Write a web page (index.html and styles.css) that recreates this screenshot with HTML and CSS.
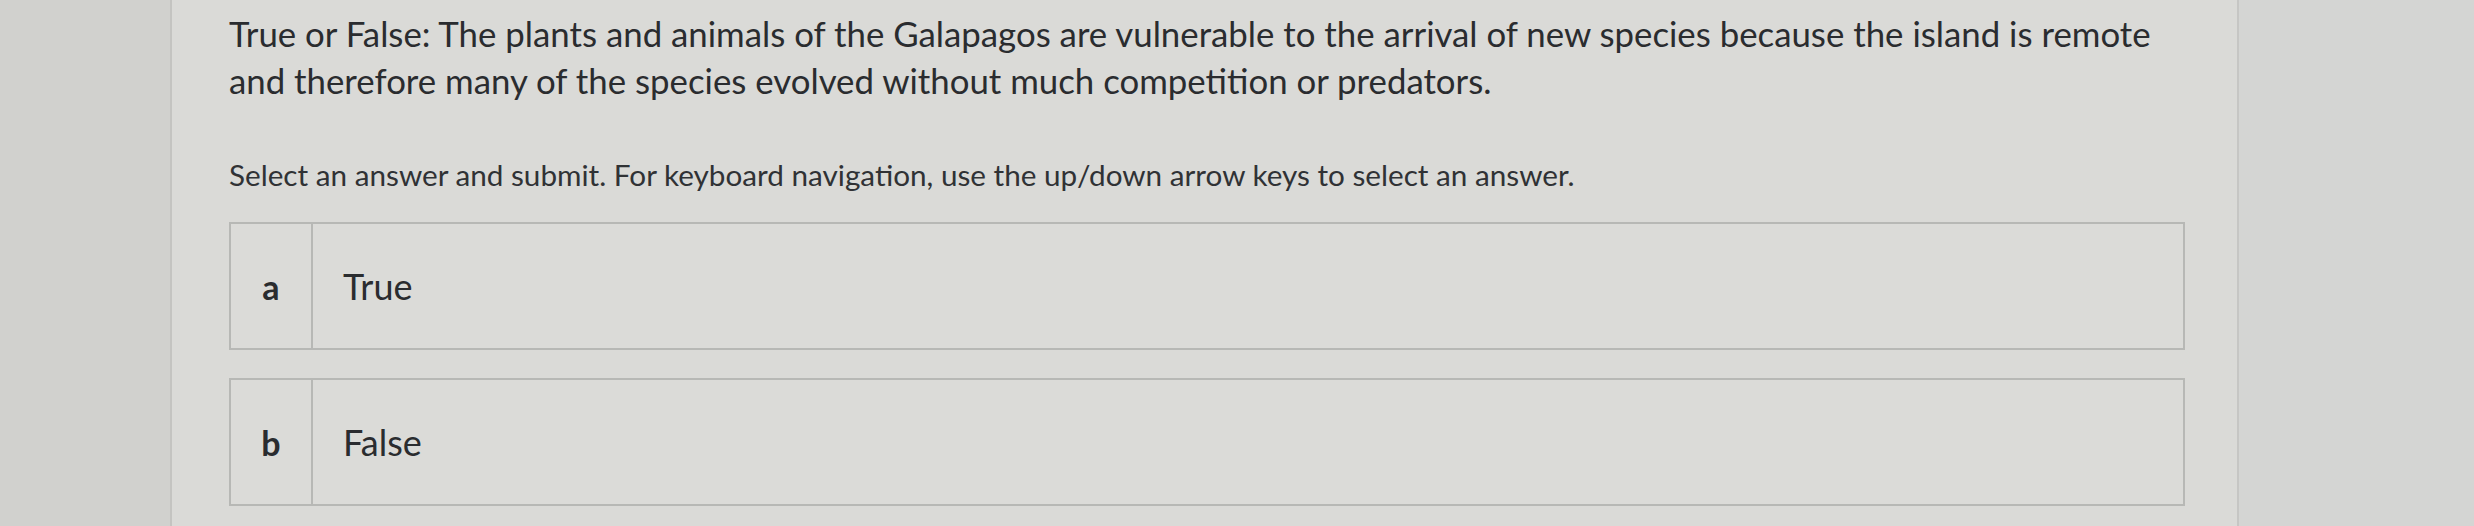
FILE: index.html
```html
<!DOCTYPE html>
<html lang="en">
<head>
    <meta charset="UTF-8">
    <meta name="viewport" content="width=device-width, initial-scale=1.0">
    <title>Question</title>
    <link rel="stylesheet" href="styles.css">
</head>
<body>
    <div class="page">
        <div class="side-left"></div>

        <div class="main">
            <p class="question">True or False: The plants and animals of the Galapagos are vulnerable to the arrival of new species because the island is remote and therefore many of the species evolved without much competition or predators.</p>

            <p class="hint">Select an answer and submit. For keyboard navigation, use the up/down arrow keys to select an answer.</p>

            <div class="answers">
                <div class="answer">
                    <div class="answer-letter">a</div>
                    <div class="answer-text">True</div>
                </div>
                <div class="answer">
                    <div class="answer-letter">b</div>
                    <div class="answer-text">False</div>
                </div>
            </div>
        </div>

        <div class="side-right"></div>
    </div>
</body>
</html>
```

FILE: styles.css
```css
body {
    margin: 0;
    background-color: #d8d8d5;
    font-family: Lato, "Liberation Sans", sans-serif;
    color: #2a2c2f;
}

.page {
    display: flex;
    height: 526px;
    overflow: hidden;
}

.side-left {
    width: 170px;
    flex-shrink: 0;
    background-color: #d1d1ce;
    border-right: 2px solid #c4c4c1;
}

.side-right {
    flex: 1;
    background-color: #d4d5d3;
    border-left: 2px solid #c6c6c4;
}

.main {
    width: 2065px;
    flex-shrink: 0;
    padding: 10px 52px 0 57px;
    box-sizing: border-box;
    background-color: #dadad7;
}

.question {
    margin: 0;
    font-size: 34.8px;
    line-height: 47px;
    width: 1930px;
}

.hint {
    margin: 52px 0 0;
    font-size: 29.7px;
    line-height: 38px;
    color: #303235;
}

.answers {
    display: flex;
    flex-direction: column;
    gap: 28px;
    margin-top: 28px;
}

.answer {
    display: flex;
    height: 128px;
    box-sizing: border-box;
    border: 2px solid #b7b8b5;
    background-color: #dbdbd8;
}

.answer-letter {
    width: 80px;
    flex-shrink: 0;
    border-right: 2px solid #b7b8b5;
    display: flex;
    align-items: center;
    justify-content: center;
    font-size: 34px;
    font-weight: bold;
}

.answer-text {
    display: flex;
    align-items: center;
    padding-left: 30px;
    font-size: 36px;
}
```
